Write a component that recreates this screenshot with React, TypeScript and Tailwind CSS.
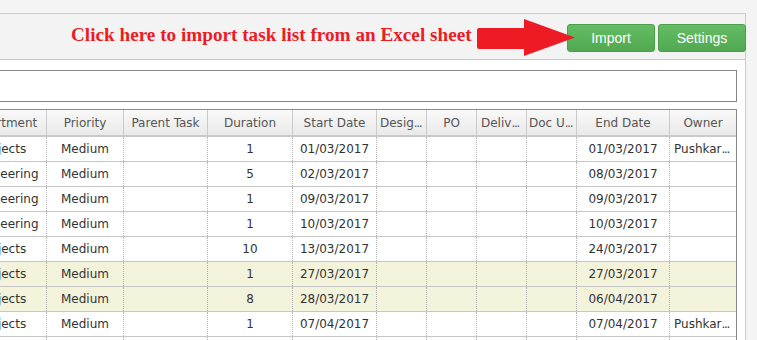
import React from "react";

type Row = {
  dept: string;
  dur: string;
  start: string;
  end: string;
  owner: string;
  hl?: boolean;
};

const rows: Row[] = [
  { dept: "Projects", dur: "1", start: "01/03/2017", end: "01/03/2017", owner: "Pushkar" },
  { dept: "Engineering", dur: "5", start: "02/03/2017", end: "08/03/2017", owner: "" },
  { dept: "Engineering", dur: "1", start: "09/03/2017", end: "09/03/2017", owner: "" },
  { dept: "Engineering", dur: "1", start: "10/03/2017", end: "10/03/2017", owner: "" },
  { dept: "Projects", dur: "10", start: "13/03/2017", end: "24/03/2017", owner: "" },
  { dept: "Projects", dur: "1", start: "27/03/2017", end: "27/03/2017", owner: "", hl: true },
  { dept: "Projects", dur: "8", start: "28/03/2017", end: "06/04/2017", owner: "", hl: true },
  { dept: "Projects", dur: "1", start: "07/04/2017", end: "07/04/2017", owner: "Pushkar" },
];

const widths = [95, 77, 84, 85, 84, 50, 50, 50, 50, 93, 66];

function Dots() {
  return <span className="tracking-[-1.3px] pr-[1px]">...</span>;
}

function HeaderCell({
  w,
  children,
  left,
  last,
  extra = "",
}: {
  w: number;
  children: React.ReactNode;
  left?: boolean;
  last?: boolean;
  extra?: string;
}) {
  return (
    <div
      style={{ width: w }}
      className={`shrink-0 h-full flex items-center whitespace-nowrap ${
        left ? "justify-start" : "justify-center overflow-hidden"
      } ${last ? "" : "border-r border-[#c9c9c9]"} ${extra}`}
    >
      {children}
    </div>
  );
}

function Cell({
  w,
  children,
  left,
  last,
  extra = "",
}: {
  w: number;
  children?: React.ReactNode;
  left?: boolean;
  last?: boolean;
  extra?: string;
}) {
  return (
    <div
      style={{ width: w }}
      className={`shrink-0 h-full flex items-center overflow-hidden whitespace-nowrap ${
        left ? "justify-start pl-[4px]" : "justify-center"
      } ${last ? "" : "border-r border-dotted border-[#b4b4b4]"} ${extra}`}
    >
      {children}
    </div>
  );
}

export default function App() {
  return (
    <div className="relative w-[757px] h-[340px] overflow-hidden bg-[#f4f4f4] pt-[13px]">
      {/* panel */}
      <div className="ml-[-60px] w-[806px] h-[400px] border border-[#cdcdcd] bg-white">
        {/* panel header */}
        <div className="h-[46px] bg-[#f3f3f3] border-b border-[#c6c6c6] flex justify-end items-start pt-[10px] pr-0">
          <div className="flex gap-[3px] -mr-px">
            <button className="w-[88px] h-[28px] rounded-[3px] border border-[#4b9f4b] bg-gradient-to-b from-[#64bd64] to-[#51a851] text-white text-[14px] flex items-center justify-center [font-family:'Liberation_Sans',Arial,sans-serif]">
              Import
            </button>
            <button className="w-[88px] h-[28px] rounded-[3px] border border-[#4b9f4b] bg-gradient-to-b from-[#64bd64] to-[#51a851] text-white text-[14px] flex items-center justify-center [font-family:'Liberation_Sans',Arial,sans-serif]">
              Settings
            </button>
          </div>
        </div>

        {/* body */}
        <div className="pt-[10px] pl-[11px] pr-[8px] [font-family:'DejaVu_Sans',Verdana,sans-serif] text-[12px]">
          <div className="h-[32px] border border-[#858585] bg-white" />
          <div className="mt-[7px] border-t border-r border-[#8a8a8a]">
            {/* header row */}
            <div className="h-[27px] flex border-b-2 border-[#c9c9c9] bg-gradient-to-b from-[#f9f9f9] to-[#e9e9e9] text-[#555]">
              <HeaderCell w={widths[0]} extra="pl-[4px]">
                Department
              </HeaderCell>
              <HeaderCell w={widths[1]}>Priority</HeaderCell>
              <HeaderCell w={widths[2]}>Parent Task</HeaderCell>
              <HeaderCell w={widths[3]}>Duration</HeaderCell>
              <HeaderCell w={widths[4]}>Start Date</HeaderCell>
              <HeaderCell w={widths[5]} left extra="pl-[3px]">
                Desig<Dots />
              </HeaderCell>
              <HeaderCell w={widths[6]}>PO</HeaderCell>
              <HeaderCell w={widths[7]} left extra="pl-[4px]">
                Deliv<Dots />
              </HeaderCell>
              <HeaderCell w={widths[8]} left extra="pl-[2px]">
                Doc U<Dots />
              </HeaderCell>
              <HeaderCell w={widths[9]}>End Date</HeaderCell>
              <HeaderCell w={widths[10]} last>
                Owner
              </HeaderCell>
            </div>
            {rows.map((r, i) => (
              <div
                key={i}
                className={`h-[25px] flex border-b border-[#c6c6c6] text-[#333] ${r.hl ? "bg-[#f3f3dc]" : "bg-white"}`}
              >
                <Cell w={widths[0]} extra="pl-[7px]">
                  {r.dept}
                </Cell>
                <Cell w={widths[1]}>Medium</Cell>
                <Cell w={widths[2]} />
                <Cell w={widths[3]}>{r.dur}</Cell>
                <Cell w={widths[4]}>{r.start}</Cell>
                <Cell w={widths[5]} />
                <Cell w={widths[6]} />
                <Cell w={widths[7]} />
                <Cell w={widths[8]} />
                <Cell w={widths[9]}>{r.end}</Cell>
                <Cell w={widths[10]} left last>
                  {r.owner ? (
                    <>
                      {r.owner}
                      <Dots />
                    </>
                  ) : null}
                </Cell>
              </div>
            ))}
            <div className="h-[25px] flex bg-white">
              {widths.map((w, i) => (
                <Cell key={i} w={w} last={i === widths.length - 1} />
              ))}
            </div>
          </div>
        </div>
      </div>

      {/* annotation overlay */}
      <div className="absolute left-[71px] top-[25px] leading-none text-[19.2px] font-bold text-[#ed1c24] whitespace-nowrap [font-family:'Liberation_Serif','Times_New_Roman',serif]">
        Click here to import task list from an Excel sheet
      </div>
      <svg className="absolute left-0 top-0" width="757" height="80" viewBox="0 0 757 80">
        <path d="M479 28 L524 28 L524 19 L575 37.5 L524 56 L524 49 L479 49 Q477 49 477 47 L477 30 Q477 28 479 28 Z" fill="#ed1c24" />
      </svg>
    </div>
  );
}
